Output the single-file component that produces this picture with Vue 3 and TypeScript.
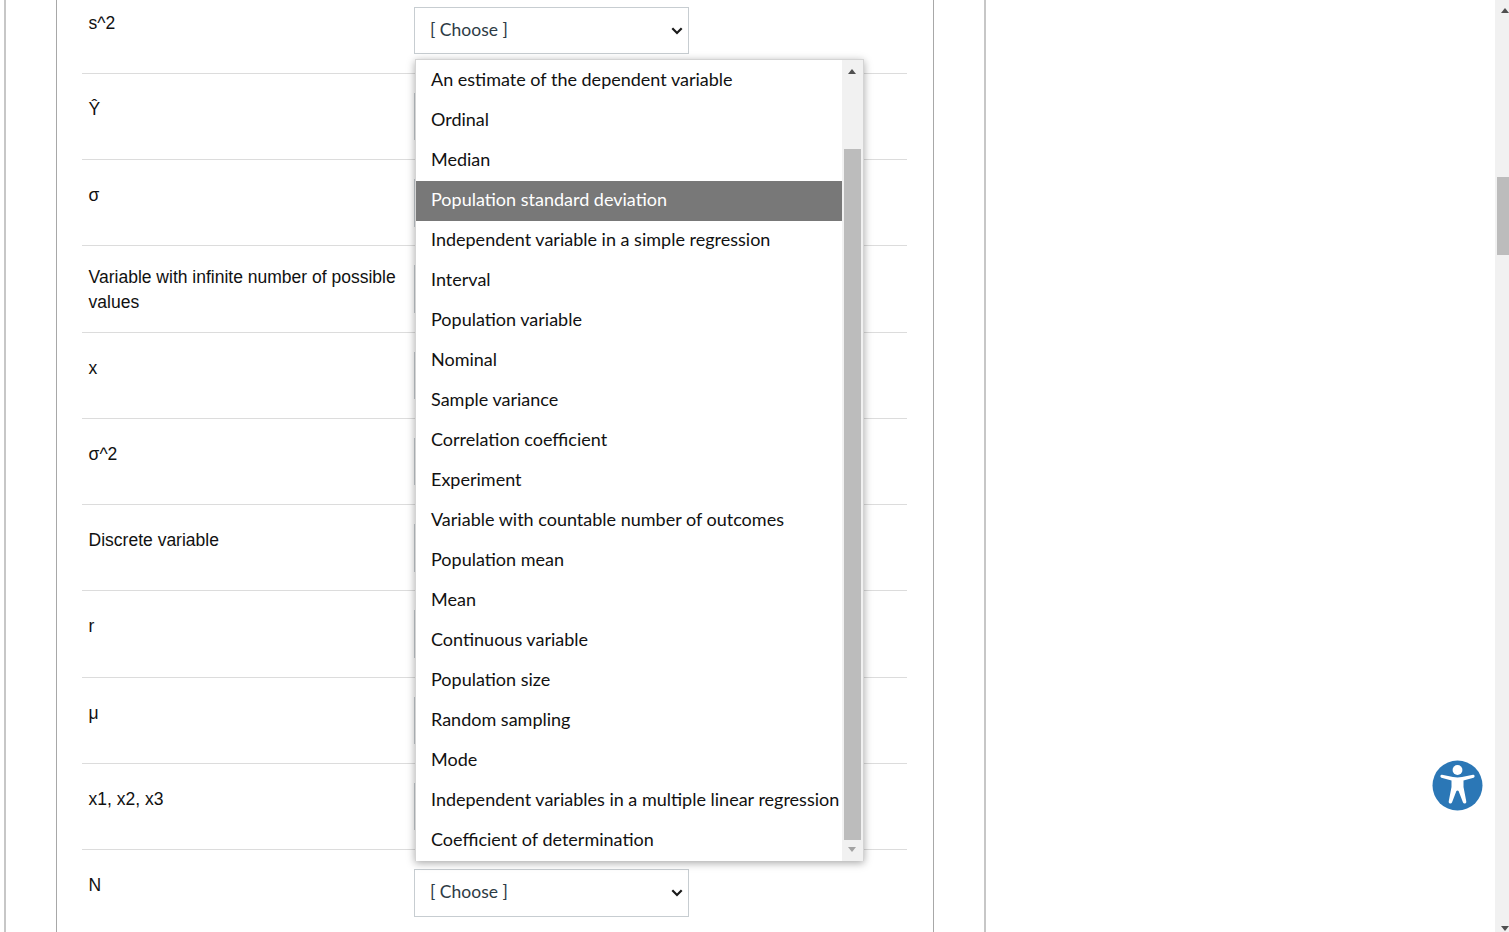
<script setup lang="ts">
const rows = [
  's^2',
  'Ŷ',
  'σ',
  'Variable with infinite number of possible values',
  'x',
  'σ^2',
  'Discrete variable',
  'r',
  'μ',
  'x1, x2, x3',
  'N',
]

const options = [
  'An estimate of the dependent variable',
  'Ordinal',
  'Median',
  'Population standard deviation',
  'Independent variable in a simple regression',
  'Interval',
  'Population variable',
  'Nominal',
  'Sample variance',
  'Correlation coefficient',
  'Experiment',
  'Variable with countable number of outcomes',
  'Population mean',
  'Mean',
  'Continuous variable',
  'Population size',
  'Random sampling',
  'Mode',
  'Independent variables in a multiple linear regression',
  'Coefficient of determination',
]
const activeOption = 'Population standard deviation'
</script>

<template>
  <div class="screen">
    <div class="page">
      <div class="outer">
        <div class="quiz">
          <div class="rows">
            <div v-for="row in rows" :key="row" class="row" :class="{ 'two-line': row.length > 40 }">
              <div class="label">{{ row }}</div>
              <div class="choose-wrap">
                <select class="choose">
                  <option>[ Choose ]</option>
                </select>
                <svg class="chevron" width="12" height="8" viewBox="0 0 12 8">
                  <path d="M1.3 1.3 L6 6 L10.7 1.3" fill="none" stroke="#1a1a1a" stroke-width="2.2" />
                </svg>
              </div>
            </div>
          </div>
        </div>
      </div>

      <!-- open select list -->
      <div class="popup">
        <ul class="popup-list">
          <li v-for="opt in options" :key="opt" :class="{ active: opt === activeOption }">{{ opt }}</li>
        </ul>
        <div class="popup-scroll">
          <span class="arrow-up small"></span>
          <div class="popup-thumb"></div>
          <span class="arrow-down small light"></span>
        </div>
      </div>

      <button class="a11y" aria-label="Accessibility">
        <svg width="51" height="51" viewBox="0 0 51 51">
          <circle cx="25.5" cy="25.5" r="25" fill="#2b77b6" />
          <circle cx="25.5" cy="10" r="4.9" fill="#fff" />
          <path
            d="M10 14.8 L21 17 Q25.5 17.8 30 17 L41 14.8 Q42.4 14.7 42.6 16 Q42.8 17.3 41.6 17.7 L31.5 20.4 L31.5 27 L34.3 41.4 Q34.5 43.2 33 43.5 Q31.6 43.8 31 42.4 L26.6 31 Q25.5 29.8 24.4 31 L20 42.4 Q19.4 43.8 18 43.5 Q16.5 43.2 16.7 41.4 L19.5 27 L19.5 20.4 L9.4 17.7 Q8.2 17.3 8.4 16 Q8.6 14.7 10 14.8 Z"
            fill="#fff"
          />
        </svg>
      </button>
    </div>

    <div class="page-scroll">
      <span class="arrow-up"></span>
      <div class="page-thumb"></div>
      <span class="arrow-down"></span>
    </div>
  </div>
</template>

<style scoped>
.screen {
  display: flex;
  height: 932px;
  overflow: hidden;
  background: #fff;
  font-family: "Liberation Sans", Arial, sans-serif;
  color: #2d3b45;
}

.page {
  position: relative;
  flex: 1;
  overflow: hidden;
  padding-left: 4px;
}

.outer {
  width: 982px;
  height: 932px;
  box-sizing: border-box;
  padding-left: 50px;
  border-left: 2px solid #c7c7c7;
  border-right: 2px solid #c7c7c7;
}

.quiz {
  display: flow-root;
  width: 878px;
  height: 932px;
  box-sizing: border-box;
  padding: 0 26px 0 25px;
  border-left: 1px solid #a8a8a8;
  border-right: 1px solid #a8a8a8;
}

.rows {
  margin-top: -12.3px;
}

.row {
  display: flex;
  align-items: flex-start;
  height: 86.25px;
  box-sizing: border-box;
  padding-top: 19px;
  border-bottom: 1px solid #dcdcdc;
}

.row:last-child {
  border-bottom: none;
}

.label {
  width: 332px;
  box-sizing: border-box;
  padding: 4px 12px 0 6.6px;
  font-size: 17.5px;
  line-height: 25px;
  color: #111;
}

.two-line .label {
  padding-top: 0;
}

.choose-wrap {
  position: relative;
  width: 275px;
  height: 47.5px;
}

.choose {
  display: block;
  width: 100%;
  height: 100%;
  box-sizing: border-box;
  padding: 0 10px 2px 15px;
  border: 1px solid #c7cdd1;
  border-radius: 0;
  background: #fff;
  appearance: none;
  font-family: Lato, sans-serif;
  font-size: 17.5px;
  color: #2d3b45;
}

.chevron {
  position: absolute;
  left: 257px;
  top: 20px;
  pointer-events: none;
}

.popup {
  position: absolute;
  left: 415px;
  top: 59px;
  display: flex;
  width: 449px;
  height: 802px;
  box-sizing: border-box;
  border: 1px solid #d4d4d4;
  border-bottom: none;
  background: #fff;
  box-shadow: 0 2px 8px rgba(0, 0, 0, 0.35);
  overflow: hidden;
}

.popup-list {
  flex: 1;
  margin: 0;
  padding: 1px 0 0;
  list-style: none;
  font-family: Lato, sans-serif;
  font-size: 18px;
  color: #111;
}

.popup-list li {
  height: 40px;
  line-height: 36px;
  padding-left: 15px;
  white-space: nowrap;
}

.popup-list li.active {
  background: #787878;
  color: #fff;
}

.popup-scroll {
  position: relative;
  display: flex;
  flex-direction: column;
  align-items: center;
  width: 21px;
  background: #f1f1f1;
}

.popup-thumb {
  position: absolute;
  top: 89px;
  left: 2px;
  right: 2px;
  height: 691px;
  background: #bcbcbc;
}

.page-scroll {
  position: relative;
  width: 14px;
  background: #f1f1f1;
}

.page-thumb {
  position: absolute;
  top: 177px;
  left: 2px;
  right: 0;
  height: 78px;
  background: #bcbcbc;
}

.arrow-up,
.arrow-down {
  position: absolute;
  left: 6px;
  width: 0;
  height: 0;
  border-left: 4px solid transparent;
  border-right: 4px solid transparent;
}

.arrow-up {
  top: 8px;
  border-bottom: 5px solid #505050;
}

.arrow-down {
  bottom: 1px;
  border-top: 5px solid #505050;
}

.small.arrow-up {
  top: 9px;
  left: 6px;
}

.small.arrow-down {
  bottom: 9px;
  left: 6px;
}

.light.arrow-down {
  border-top-color: #a3a3a3;
}

.a11y {
  position: absolute;
  left: 1432px;
  top: 759.5px;
  width: 51px;
  height: 51px;
  padding: 0;
  border: none;
  background: none;
}
</style>

<style>
html,
body {
  margin: 0;
  overflow: hidden;
}
</style>
